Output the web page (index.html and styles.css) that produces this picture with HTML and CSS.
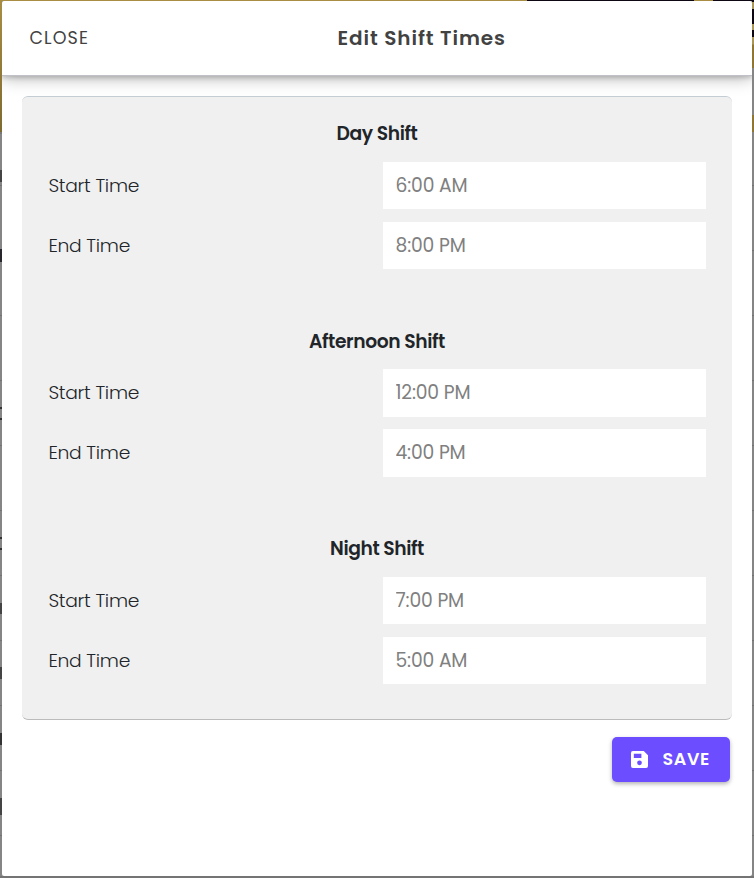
FILE: index.html
```html
<!DOCTYPE html>
<html lang="en">
<head>
    <meta charset="UTF-8">
    <title>Edit Shift Times</title>
    <link rel="stylesheet" href="styles.css">
</head>
<body>
    <div class="modal">
        <header class="toolbar">
            <button type="button" class="close-btn">CLOSE</button>
            <h1>Edit Shift Times</h1>
        </header>

        <form class="content">
            <div class="card">
                <section class="shift">
                    <h2>Day Shift</h2>
                    <div class="row">
                        <label for="dayStart">Start Time</label>
                        <input type="text" id="dayStart" value="6:00 AM">
                    </div>
                    <div class="row">
                        <label for="dayEnd">End Time</label>
                        <input type="text" id="dayEnd" value="8:00 PM">
                    </div>
                </section>
                <section class="shift">
                    <h2>Afternoon Shift</h2>
                    <div class="row">
                        <label for="afternoonStart">Start Time</label>
                        <input type="text" id="afternoonStart" value="12:00 PM">
                    </div>
                    <div class="row">
                        <label for="afternoonEnd">End Time</label>
                        <input type="text" id="afternoonEnd" value="4:00 PM">
                    </div>
                </section>
                <section class="shift">
                    <h2>Night Shift</h2>
                    <div class="row">
                        <label for="nightStart">Start Time</label>
                        <input type="text" id="nightStart" value="7:00 PM">
                    </div>
                    <div class="row">
                        <label for="nightEnd">End Time</label>
                        <input type="text" id="nightEnd" value="5:00 AM">
                    </div>
                </section>
            </div>
            <div class="actions">
                <button type="button" class="save-btn">
                    <svg viewBox="3 3 18 18" width="17" height="17"><path fill="#fff" d="M16.5 3H5a2 2 0 0 0-2 2v14a2 2 0 0 0 2 2h14a2 2 0 0 0 2-2V7.5L16.5 3zM12 18a2.5 2.5 0 1 1 0-5 2.5 2.5 0 0 1 0 5zm2-7.500H6V6h8v4.500z"/></svg>
                    <span>SAVE</span>
                </button>
            </div>
        </form>
    </div>
</body>
</html>
```
FILE: styles.css
```css
* {
    box-sizing: border-box;
}

body {
    margin: 0;
    height: 878px;
    padding: 1px 2px 2px;
    overflow: hidden;
    font-family: Poppins, Inter, sans-serif;
    /* dimmed page showing around the modal */
    background:
        linear-gradient(#747474, #747474) 0 100% / 100% 2px no-repeat,
        linear-gradient(90deg, #a88d43 527px, #0c0713 527px, #0c0713 694px, #a88d43 694px, #a88d43 713px, #0c0713 713px) 0 0 / 100% 1px no-repeat,
        linear-gradient(#0c0713 2px, #a99658 2px, #a99658 9px, #0c0713 9px, #0c0713 24px, #a99658 24px, #a99658 30px, #0c0713 30px, #0c0713 37px, #a99658 37px, #a99658 44px, #8f7635 45px, #8f7635 68px, #858585 68px, #858585 115px, #8f7635 115px, #8f7635 132px, transparent 132px) 100% 0 / 2px 100% no-repeat,
        linear-gradient(#a88d43, #7f6a31 132px, #777 132px, #777 134px, transparent 134px) 0 0 / 2px 100% no-repeat,
        linear-gradient(transparent 170px, #444 170px, #444 182px, transparent 182px, transparent 249px, #26262c 249px, #26262c 262px, transparent 262px, transparent 407px, #333 407px, #333 409px, transparent 409px, transparent 418px, #333 418px, #333 420px, transparent 420px, transparent 537px, #333 537px, #333 539px, transparent 539px, transparent 548px, #333 548px, #333 550px, transparent 550px, transparent 603px, #444 603px, #444 614px, transparent 614px, transparent 667px, #444 667px, #444 679px, transparent 679px, transparent 733px, #333 733px, #333 745px, transparent 745px, transparent 798px, #444 798px, #444 815px, transparent 815px) 0 0 / 2px 100% no-repeat,
        repeating-linear-gradient(#858585, #858585 64px, #737373 64px, #737373 65px) 0 -9px / 100% 900px no-repeat;
}

.modal {
    height: 875px;
    background: #fff;
    border-radius: 2px;
    overflow: hidden;
}

.toolbar {
    display: flex;
    align-items: center;
    height: 75px;
    padding-left: 27.5px;
    border-bottom: 1px solid #c0c0c6;
    box-shadow: 0 1px 16px rgba(0, 0, 0, 0.35), 0 2px 4px rgba(0, 0, 0, 0.14);
}

.close-btn {
    width: 62px;
    padding: 0;
    border: 0;
    background: none;
    font: 400 17.5px Poppins, Inter, sans-serif;
    letter-spacing: 1.1px;
    text-align: left;
    color: #424242;
}

.toolbar h1 {
    margin: 0 0 0 246px;
    font-size: 20px;
    font-weight: 600;
    letter-spacing: 0.9px;
    color: #424242;
    white-space: nowrap;
}

.content {
    padding: 20px 20px 0;
}

.card {
    height: 624px;
    padding: 24px 26px 0;
    background: #f0f0f0;
    border-top: 1px solid #c5cdd4;
    border-bottom: 1px solid #bbb;
    border-radius: 6px;
}

.shift {
    height: 207.5px;
}

.shift h2 {
    margin: 0 0 14.5px;
    font-size: 18.7px;
    font-weight: 600;
    line-height: 26px;
    letter-spacing: -0.4px;
    text-align: center;
    color: #212529;
}

.row {
    display: grid;
    grid-template-columns: 335px 323px;
    align-items: center;
    margin-bottom: 12.5px;
}

.row label {
    padding-left: 0.4px;
    font-size: 18.7px;
    font-weight: 300;
    letter-spacing: -0.25px;
    color: #212529;
}

.row input {
    width: 323px;
    height: 47.5px;
    padding: 0 12.5px;
    border: 0;
    background: #fff;
    font: 400 18.7px Poppins, Inter, sans-serif;
    letter-spacing: -0.15px;
    color: #808080;
}

.actions {
    display: flex;
    justify-content: flex-end;
    padding: 17px 2px 0 0;
}

.save-btn {
    display: flex;
    align-items: center;
    width: 118px;
    height: 45px;
    padding: 0 0 1px 18.5px;
    gap: 15px;
    border: 0;
    border-radius: 5px;
    background: #6c4dff;
    box-shadow: 0 2px 4px rgba(0, 0, 0, 0.3);
    font: 600 17.5px Poppins, Inter, sans-serif;
    letter-spacing: 0.6px;
    color: #fff;
}
```
